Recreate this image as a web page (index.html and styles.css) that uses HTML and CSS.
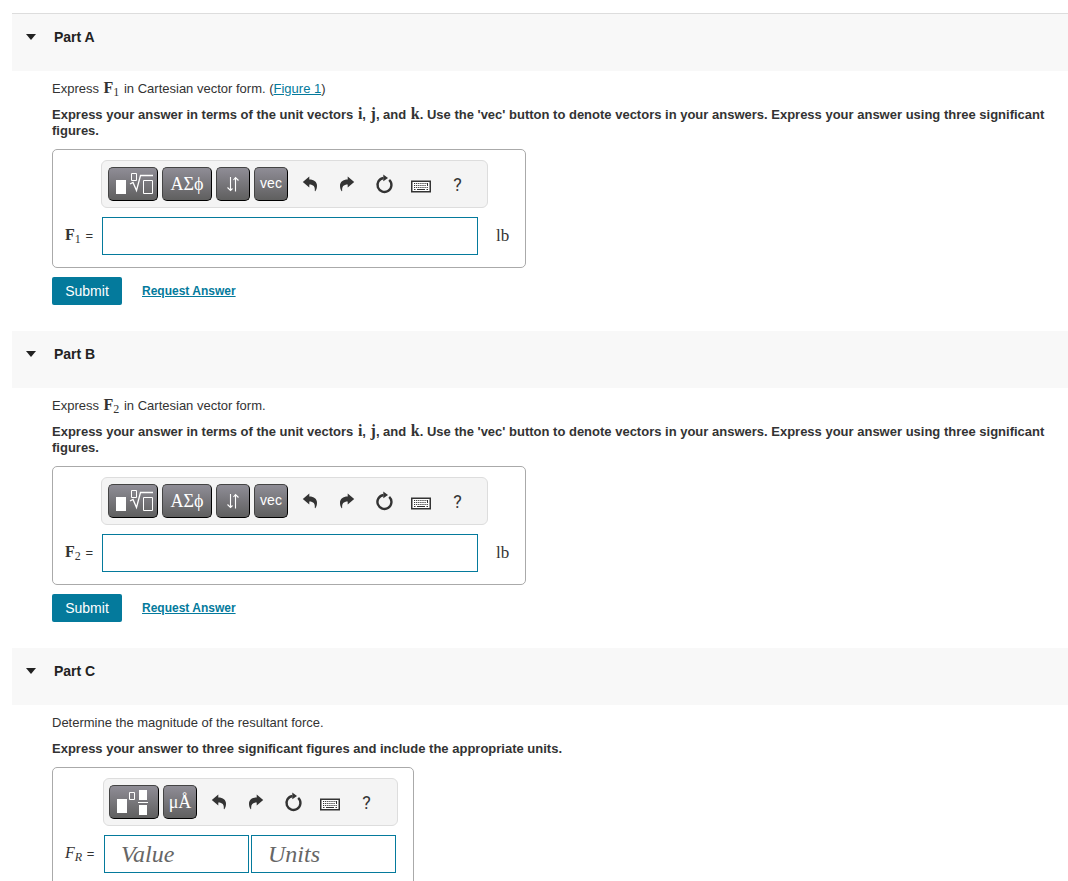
FILE: index.html
```
<!DOCTYPE html>
<html lang="en">
<head>
    <meta charset="UTF-8">
    <meta name="viewport" content="width=device-width, initial-scale=1.0">
    <title>Resultant Force</title>
    <link rel="stylesheet" href="styles.css">
</head>
<body>
    <!-- shared toolbar icons -->
    <svg class="sprite" aria-hidden="true">
        <symbol id="undo" viewBox="0 0 16 16">
            <path d="M0.8 6L7.3 0.5V3.6C12 3.6 15 6 15 9.8C15 12 14.5 13.6 13.3 15.2L12.8 15C13.2 10.5 11.5 8.6 7.3 8.5V11.5Z"/>
        </symbol>
        <symbol id="redo" viewBox="0 0 16 16">
            <path d="M15.2 6L8.7 0.5V3.6C4 3.6 1 6 1 9.8C1 12 1.5 13.6 2.7 15.2L3.2 15C2.8 10.5 4.5 8.6 8.7 8.5V11.5Z"/>
        </symbol>
        <symbol id="reset" viewBox="0 0 18 20">
            <path d="M14.2 5.8A7 7 0 1 1 8.5 4" fill="none" stroke="#333" stroke-width="2.4"/>
            <path d="M8.3 0.5L13 3.9L8.3 7.2Z"/>
        </symbol>
        <symbol id="keyboard" viewBox="0 0 20 13">
            <rect x="0.75" y="1.25" width="18.5" height="10.5" fill="#fff" stroke="#333" stroke-width="1.5"/>
            <path d="M3 3.5H17M3 5.5H15M3 7.5H17" fill="none" stroke="#333" stroke-width="1" stroke-dasharray="1.2 0.9"/>
            <path d="M3 9.5H4.5M6 9.5H14M15.5 9.5H17M16.5 3V6" fill="none" stroke="#333" stroke-width="1"/>
        </symbol>
        <symbol id="root" viewBox="0 0 38 24">
            <rect x="0" y="8" width="10" height="14" fill="#fff"/>
            <path d="M15.5 1.5H20.5V8.5H15.5ZM27.5 8.5H36.5V21.5H27.5Z" fill="none" stroke="#fff"/>
            <path d="M14 12L17 10.5L20.5 18.5L24.5 3.5H37" fill="none" stroke="#fff" stroke-width="1.3"/>
        </symbol>
        <symbol id="templates" viewBox="0 0 34 26">
            <rect x="0" y="10" width="10" height="14" fill="#fff"/>
            <path d="M12.5 3.5H17.5V10.5H12.5Z" fill="none" stroke="#fff"/>
            <path d="M22 1H30V11H22ZM21 13H31V14H21ZM22 16H30V26H22Z" fill="#fff"/>
        </symbol>
        <symbol id="updown" viewBox="0 0 14 16">
            <path d="M4.5 1V14.5M1.5 11.5L4.5 14.5L6.5 12.5M9.5 15.5V2M7.5 4L9.5 1.5L12.5 4.5" fill="none" stroke="#fff" stroke-width="1.1"/>
        </symbol>
    </svg>

    <main class="problem">
        <section class="part">
            <header class="part-header">
                <button class="toggle" aria-label="Collapse Part A"></button>
                <h2>Part A</h2>
            </header>
            <div class="part-body">
                <p>Express <span class="math">F<sub>1</sub></span> in Cartesian vector form. (<a href="#figure1">Figure 1</a>)</p>
                <p class="instructions">Express your answer in terms of the unit vectors <span class="math">i</span>, <span class="math">j</span>, and <span class="math">k</span>. Use the 'vec' button to denote vectors in your answers. Express your answer using three significant figures.</p>
                <div class="answer">
                    <div class="toolbar">
                        <button class="key wide" aria-label="Templates"><svg class="root"><use href="#root"/></svg></button>
                        <button class="key wide greek">ΑΣϕ</button>
                        <button class="key" aria-label="Arrows"><svg class="updown"><use href="#updown"/></svg></button>
                        <button class="key vec">vec</button>
                        <div class="tools">
                            <button aria-label="Undo"><svg class="arrow"><use href="#undo"/></svg></button>
                            <button aria-label="Redo"><svg class="arrow"><use href="#redo"/></svg></button>
                            <button aria-label="Reset"><svg class="reset"><use href="#reset"/></svg></button>
                            <button aria-label="Keyboard shortcuts"><svg class="keyboard"><use href="#keyboard"/></svg></button>
                            <button>?</button>
                        </div>
                    </div>
                    <div class="entry">
                        <label for="f1"><span class="math">F<sub>1</sub></span> =</label>
                        <input id="f1" type="text">
                        <span class="unit">lb</span>
                    </div>
                </div>
                <div class="actions">
                    <button class="submit">Submit</button>
                    <a href="#answerA">Request Answer</a>
                </div>
            </div>
        </section>

        <section class="part">
            <header class="part-header">
                <button class="toggle" aria-label="Collapse Part B"></button>
                <h2>Part B</h2>
            </header>
            <div class="part-body">
                <p>Express <span class="math">F<sub>2</sub></span> in Cartesian vector form.</p>
                <p class="instructions">Express your answer in terms of the unit vectors <span class="math">i</span>, <span class="math">j</span>, and <span class="math">k</span>. Use the 'vec' button to denote vectors in your answers. Express your answer using three significant figures.</p>
                <div class="answer">
                    <div class="toolbar">
                        <button class="key wide" aria-label="Templates"><svg class="root"><use href="#root"/></svg></button>
                        <button class="key wide greek">ΑΣϕ</button>
                        <button class="key" aria-label="Arrows"><svg class="updown"><use href="#updown"/></svg></button>
                        <button class="key vec">vec</button>
                        <div class="tools">
                            <button aria-label="Undo"><svg class="arrow"><use href="#undo"/></svg></button>
                            <button aria-label="Redo"><svg class="arrow"><use href="#redo"/></svg></button>
                            <button aria-label="Reset"><svg class="reset"><use href="#reset"/></svg></button>
                            <button aria-label="Keyboard shortcuts"><svg class="keyboard"><use href="#keyboard"/></svg></button>
                            <button>?</button>
                        </div>
                    </div>
                    <div class="entry">
                        <label for="f2"><span class="math">F<sub>2</sub></span> =</label>
                        <input id="f2" type="text">
                        <span class="unit">lb</span>
                    </div>
                </div>
                <div class="actions">
                    <button class="submit">Submit</button>
                    <a href="#answerB">Request Answer</a>
                </div>
            </div>
        </section>

        <section class="part">
            <header class="part-header">
                <button class="toggle" aria-label="Collapse Part C"></button>
                <h2>Part C</h2>
            </header>
            <div class="part-body">
                <p>Determine the magnitude of the resultant force.</p>
                <p class="instructions">Express your answer to three significant figures and include the appropriate units.</p>
                <div class="answer with-units">
                    <div class="toolbar">
                        <button class="key wide" aria-label="Templates"><svg class="templates"><use href="#templates"/></svg></button>
                        <button class="key greek">μÅ</button>
                        <div class="tools">
                            <button aria-label="Undo"><svg class="arrow"><use href="#undo"/></svg></button>
                            <button aria-label="Redo"><svg class="arrow"><use href="#redo"/></svg></button>
                            <button aria-label="Reset"><svg class="reset"><use href="#reset"/></svg></button>
                            <button aria-label="Keyboard shortcuts"><svg class="keyboard"><use href="#keyboard"/></svg></button>
                            <button>?</button>
                        </div>
                    </div>
                    <div class="entry">
                        <label for="fr"><span class="math var">F<sub>R</sub></span> =</label>
                        <input id="fr" type="text" placeholder="Value">
                        <input type="text" placeholder="Units" aria-label="Units">
                    </div>
                </div>
            </div>
        </section>
    </main>
</body>
</html>
```
FILE: styles.css
```
* {
    box-sizing: border-box;
}
html {
    overflow: hidden;
}
body {
    margin: 0;
    background: #fff;
    color: #333;
    font-family: "Liberation Sans", Arial, sans-serif;
    font-size: 13px;
    line-height: 16px;
}
button {
    font-family: inherit;
    padding: 0;
    border: 0;
    background: none;
    cursor: pointer;
}
a {
    color: #047a9c;
}
.sprite {
    display: none;
}
.problem {
    margin: 13px 0 0 12px;
    border-top: 1px solid #ddd;
}
.part-header {
    display: flex;
    align-items: flex-start;
    gap: 18px;
    height: 57px;
    padding: 15px 14px;
    background: #f8f8f8;
}
.part-header h2 {
    margin: 0;
    font-size: 14px;
    line-height: 16px;
    color: #222;
}
.toggle {
    width: 10px;
    height: 6px;
    margin-top: 5px;
    background: #222;
    clip-path: polygon(0 0, 100% 0, 50% 100%);
}
.part-body {
    padding: 10px 20px 26px 40px;
}
p {
    margin: 0 0 10px;
}
.instructions {
    font-weight: bold;
}
.math {
    margin-left: 1px;
    font-family: "Liberation Serif", "Times New Roman", serif;
    font-size: 16px;
    font-weight: bold;
    line-height: 12px;
}
.math sub {
    margin-right: 1px;
    font-size: 12px;
    font-weight: normal;
    line-height: 8px;
    vertical-align: -3px;
}
.var {
    font-style: italic;
    font-weight: normal;
}
.answer {
    width: fit-content;
    padding: 10px 16px 12px 11px;
    border: 1px solid #aaa;
    border-radius: 5px;
}
.toolbar {
    display: flex;
    align-items: center;
    gap: 4px;
    width: fit-content;
    height: 48px;
    margin-left: 37px;
    padding: 0 11px 0 6px;
    background: #f4f4f4;
    border: 1px solid #ddd;
    border-radius: 6px;
}
.key {
    display: flex;
    align-items: center;
    justify-content: center;
    width: 34px;
    height: 34px;
    color: #fff;
    background: linear-gradient(#8f8d96, #5f5f5f);
    border: 1px solid #000;
    border-top-color: #444;
    border-left-color: #444;
    border-radius: 5px;
}
.key.wide {
    width: 50px;
}
.greek {
    font-family: "Liberation Serif", "Times New Roman", serif;
    font-size: 18px;
}
.vec {
    padding-bottom: 2px;
    font-size: 14px;
}
.tools {
    display: flex;
    margin-left: -1px;
}
.tools button {
    display: flex;
    align-items: center;
    justify-content: center;
    width: 37px;
    height: 34px;
    color: #333;
    font-family: Roboto, sans-serif;
    font-size: 18px;
}
.tools svg {
    fill: #333;
}
.arrow {
    width: 16px;
    height: 16px;
}
.reset {
    width: 18px;
    height: 20px;
}
.keyboard {
    width: 20px;
    height: 13px;
    margin-top: 4px;
}
.root {
    width: 38px;
    height: 24px;
    margin-left: 3px;
}
.updown {
    width: 14px;
    height: 16px;
}
.templates {
    width: 34px;
    height: 26px;
}
.entry {
    display: flex;
    align-items: center;
    margin-top: 9px;
}
.entry label {
    width: 38px;
    white-space: nowrap;
}
.entry input {
    width: 376px;
    height: 38px;
    padding: 0 16px;
    border: 1px solid #047a9c;
    border-radius: 0;
    background: #fff;
    color: #333;
    font-family: "Liberation Serif", "Times New Roman", serif;
    font-size: 24px;
}
.entry input::placeholder {
    color: #666;
    font-style: italic;
    opacity: 1;
}
.unit {
    margin-left: 18px;
    font-family: "Liberation Serif", "Times New Roman", serif;
    font-size: 17px;
}
.with-units {
    padding-right: 15px;
}
.with-units .toolbar {
    margin-left: 39px;
    padding: 0 12px 0 5px;
}
.with-units label {
    width: 40px;
}
.with-units input {
    width: 145px;
}
.with-units input + input {
    margin-left: 2px;
}
.actions {
    display: flex;
    align-items: center;
    gap: 20px;
    margin-top: 9px;
}
.actions a {
    font-size: 12px;
    font-weight: bold;
}
.submit {
    width: 70px;
    height: 28px;
    color: #fff;
    background: #047a9c;
    border-radius: 2px;
    font-size: 14px;
}
```
